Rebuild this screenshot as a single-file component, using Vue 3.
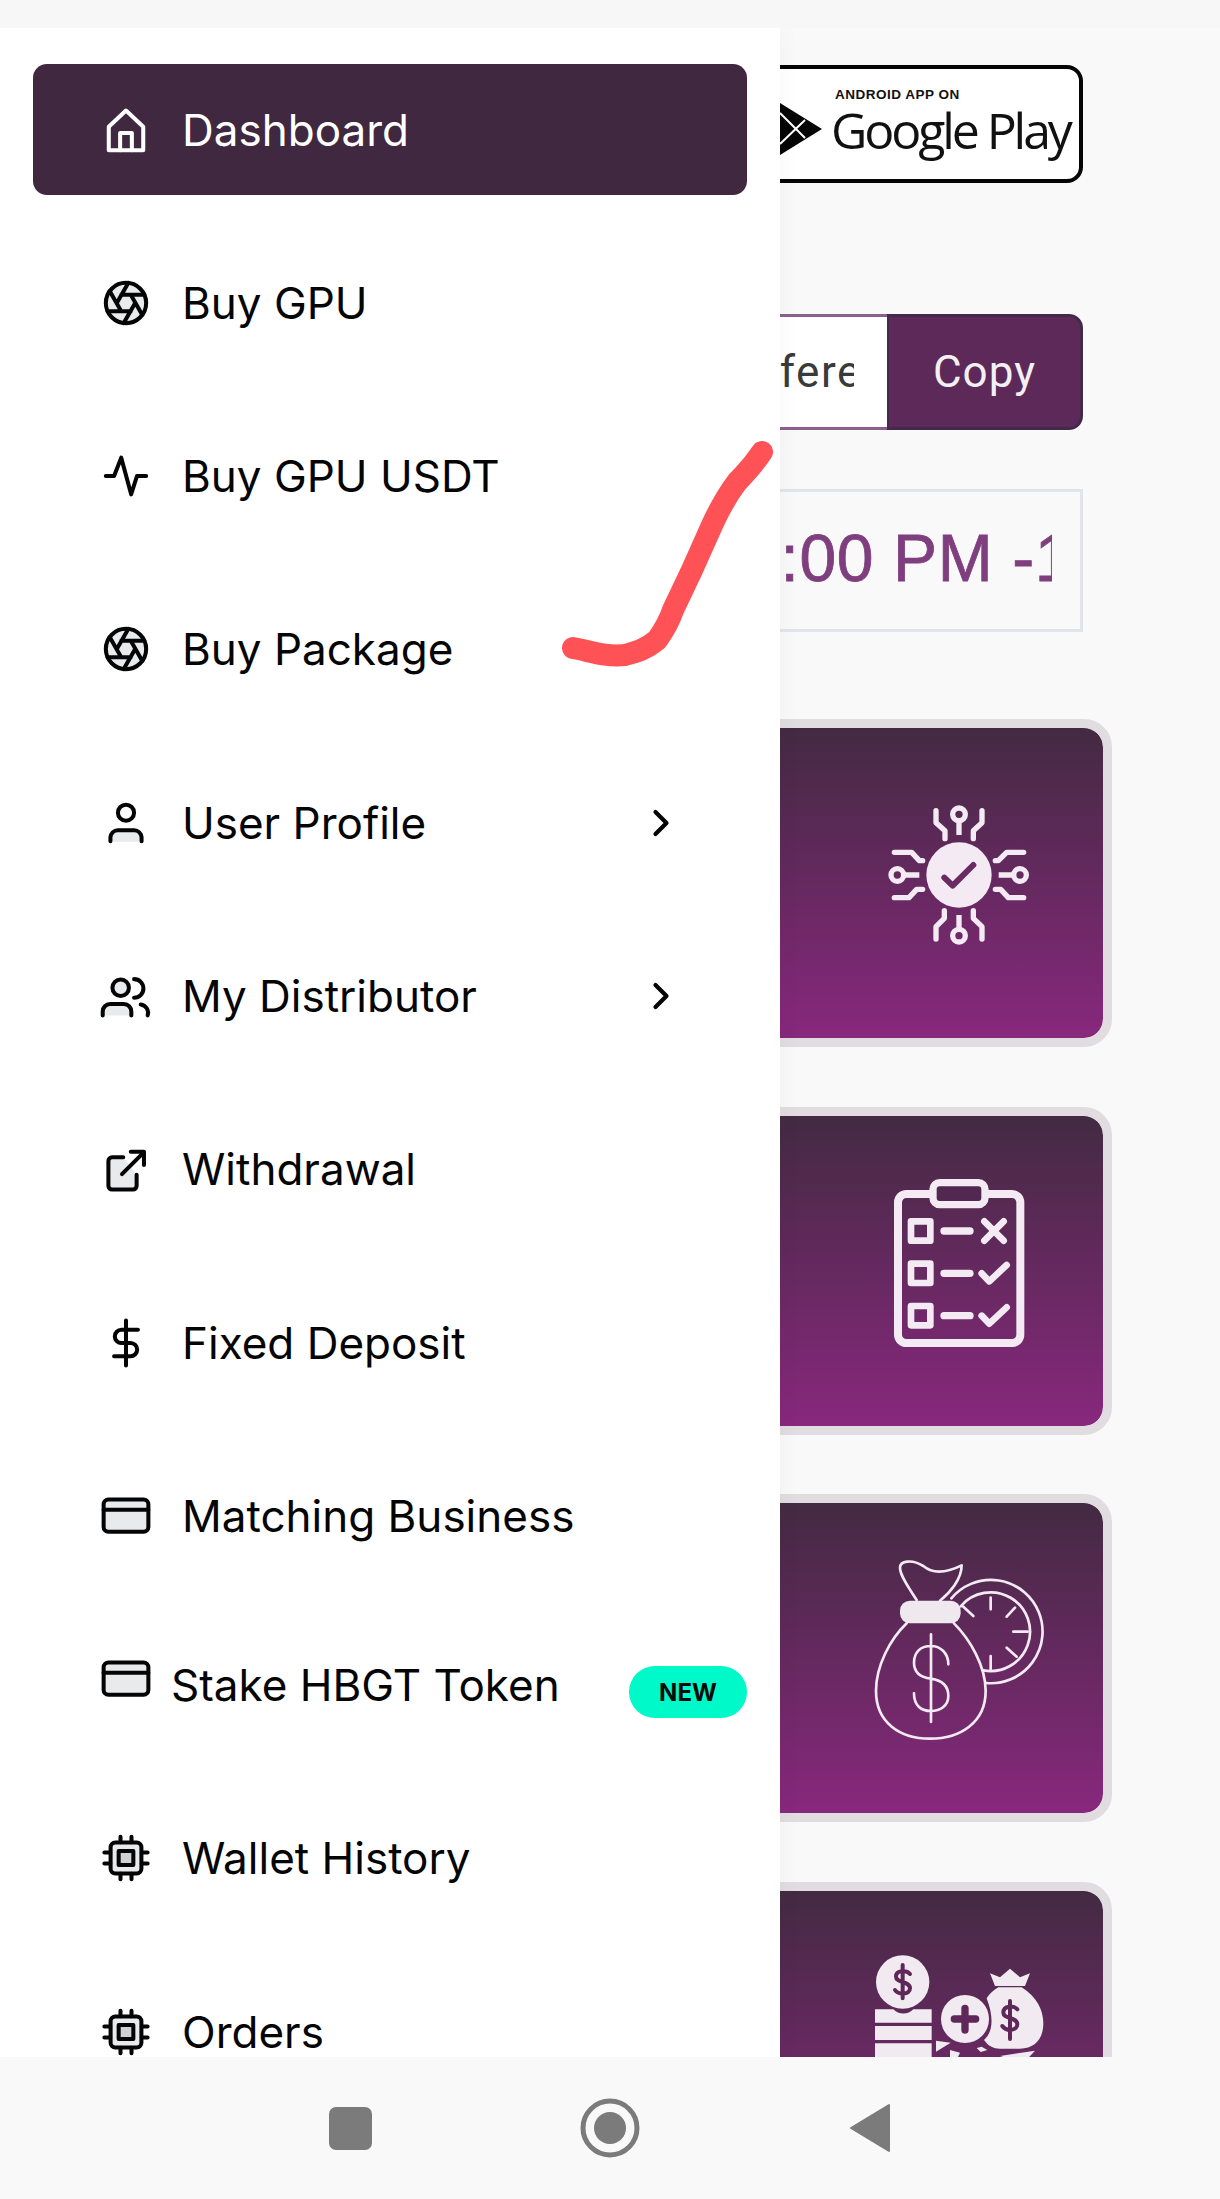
<script setup>
const cards = ['chip', 'list', 'bag', 'coins']
const items = [
  { label: 'Dashboard', icon: 'home', active: true },
  { label: 'Buy GPU', icon: 'aperture' },
  { label: 'Buy GPU USDT', icon: 'activity' },
  { label: 'Buy Package', icon: 'aperture' },
  { label: 'User Profile', icon: 'user', chevron: true },
  { label: 'My Distributor', icon: 'users', chevron: true },
  { label: 'Withdrawal', icon: 'external' },
  { label: 'Fixed Deposit', icon: 'dollar' },
  { label: 'Matching Business', icon: 'card' },
  { label: 'Stake HBGT Token', icon: 'card', stake: true, badge: 'NEW' },
  { label: 'Wallet History', icon: 'cpu' },
  { label: 'Orders', icon: 'cpu' },
]
</script>

<template>
  <div class="screen">
    <div class="status"></div>
    <div class="main">
      <div class="content">
        <div class="badge">
          <svg class="play" viewBox="0 0 52 52" width="52" height="52">
            <polygon points="0,0 10,0 52,26 10,52 0,52" fill="#050505" />
            <path d="M10 10 L35 35 M10 41 L35 17" stroke="#fff" stroke-width="2" />
          </svg>
          <div class="badge-text">
            <div class="badge-small">ANDROID APP ON</div>
            <div class="badge-big">Google Play</div>
          </div>
        </div>
        <div class="refer">
          <div class="refer-input"><div class="refer-clip">Reference</div></div>
          <button class="copy">Copy</button>
        </div>
        <div class="date"><div class="date-clip">10:00 PM -11:00 PM</div></div>
        <div class="cards">
          <div v-for="c in cards" :key="c" class="stat">
            <svg v-if="c === 'chip'" class="stat-icon" viewBox="327 255 540 540">
              <circle cx="597" cy="525" r="98" fill="#f3eaf3" />
              <path d="M553 533 L578 557 L640 495" fill="none" stroke="#6a2a63" stroke-width="18" stroke-linecap="round" stroke-linejoin="round" />
              <g fill="none" stroke="#f3eaf3" stroke-width="16" stroke-linecap="round" stroke-linejoin="round">
                <circle cx="597" cy="343" r="19" />
                <circle cx="597" cy="707" r="19" />
                <circle cx="412" cy="525" r="19" />
                <circle cx="780" cy="525" r="19" />
                <path d="M597 364V405M597 645V686M433 525H478M716 525H759" stroke-linecap="butt" />
                <path d="M528 332V368L555 392V416M666 332V368L640 392V416M528 717V680L553 655V632M666 717V680L640 655V632" />
                <path d="M403 457H455L478 482H488M791 457H740L715 482H706M403 593H447L470 568H488M791 593H745L722 568H706" />
              </g>
            </svg>
            <svg v-else-if="c === 'list'" class="stat-icon" viewBox="327 279 540 540">
              <g fill="none" stroke="#f3eaf3" stroke-linecap="round" stroke-linejoin="round">
                <rect x="414" y="342" width="367" height="447" rx="25" stroke-width="24" />
                <rect x="519" y="308" width="156" height="66" rx="20" stroke-width="22" fill="#502850" />
                <rect x="453" y="424" width="58" height="58" stroke-width="20" />
                <rect x="453" y="551" width="58" height="58" stroke-width="20" />
                <rect x="453" y="678" width="58" height="58" stroke-width="20" />
                <path d="M552 453H630M552 580H630M552 707H630" stroke-width="22" />
                <path d="M673 424L731 482M731 424L673 482M665 580L688 604L740 555M665 707L688 731L740 682" stroke-width="20" />
              </g>
            </svg>
            <svg v-else-if="c === 'bag'" class="stat-icon" viewBox="327 272 540 540">
              <g fill="none" stroke="#f3eaf3" stroke-width="8" stroke-linecap="round" stroke-linejoin="round">
                <path d="M470 392C450 360 420 320 420 295C420 275 455 268 490 290C520 315 560 310 605 288C605 330 570 370 540 394" />
                <path d="M440 462C390 510 348 590 348 665C348 760 420 808 510 808C600 808 677 760 677 665C677 590 630 510 582 462" />
                <path d="M513 495V758M565 585C565 550 540 530 513 530C480 530 462 550 462 580C462 615 490 625 513 628C540 632 565 645 565 680C565 710 540 725 513 725C485 725 462 710 462 672" />
                <path d="M574 387A155 155 0 1 1 678 641M602 411A118 118 0 1 1 670 603" />
                <path d="M692 385V420M765 415L740 442M803 487H760M770 562L740 535M692 600V560M610 412L640 440" />
              </g>
              <rect x="420" y="394" width="182" height="68" rx="30" fill="#efe9ef" />
            </svg>
            <svg v-else class="stat-icon" viewBox="327 294 540 540">
              <g fill="#f1ebf1">
                <circle cx="428" cy="396" r="80" />
                <path d="M345 478H400C415 495 445 495 460 478H515V518H345ZM345 528H515V570H345ZM345 580H515V660H345Z" />
                <path d="M690 370L720 382L750 356L780 382L810 370L795 408H705ZM715 412H785C830 440 850 480 850 520C850 565 825 596 780 596H720C700 596 685 588 672 570C695 550 705 510 680 445C690 430 700 420 715 412Z" />
                <circle cx="615" cy="507" r="72" />
                <path d="M528 605V572L572 578ZM650 594L665 590L682 600L662 606ZM570 600L600 608L590 630H570ZM720 618L825 602L790 640Z" />
              </g>
              <g fill="none" stroke="#5f2859" stroke-linecap="round" stroke-linejoin="round">
                <path d="M615 475V540M583 507H647" stroke-width="22" />
                <path d="M428 345V445M450 372C440 360 408 360 408 380C408 400 450 392 450 415C450 435 415 435 405 420" stroke-width="12" />
                <path d="M750 453V567M772 478C762 466 730 466 730 488C730 508 772 500 772 523C772 544 738 544 727 528" stroke-width="12" />
              </g>
            </svg>
          </div>
        </div>
      </div>

      <aside class="drawer">
        <div
          v-for="item in items"
          :key="item.label"
          class="row"
          :class="{ active: item.active, stake: item.stake }"
        >
          <svg class="ico" viewBox="0 0 24 24" fill="none" stroke="currentColor" stroke-width="2.2" stroke-linecap="round" stroke-linejoin="round">
            <template v-if="item.icon === 'home'">
              <path d="M2.6 23V10.2L12 1.4l9.4 8.8V23z" />
              <path d="M8.8 23V13.6h6.4V23" />
            </template>
            <template v-else-if="item.icon === 'aperture'">
              <circle cx="12" cy="12" r="11" fill="#e9eaec" />
              <path d="M14.6 7.5l6.3 11M9.4 7.5h12.6M7 12l6.3-11M9.4 16.5L3.1 5.5M14.6 16.5H2M17 12l-6.3 11" />
            </template>
            <template v-else-if="item.icon === 'activity'">
              <path d="M1 12h4.5L9.4 2l5.4 20 3.2-10h5" />
            </template>
            <template v-else-if="item.icon === 'user'">
              <path d="M3.5 22.2v-2.4a4 4 0 0 1 4-3.8h9a4 4 0 0 1 4 3.8v2.4z" fill="#e9eaec" stroke="none" />
              <path d="M3.5 22v-2.2a4 4 0 0 1 4-3.8h9a4 4 0 0 1 4 3.8V22" />
              <circle cx="12" cy="6.4" r="4.4" />
            </template>
            <template v-else-if="item.icon === 'users'">
              <path d="M-.7 22.6v-2.2a4 4 0 0 1 4-4h7.6a4 4 0 0 1 4 4v2.2z" fill="#e9eaec" stroke="none" />
              <circle cx="9.1" cy="7.5" r="4.5" fill="#e9eaec" />
              <path d="M-.7 22.6v-2.2a4 4 0 0 1 4-4h7.6a4 4 0 0 1 4 4v2.2" />
              <path d="M16.4 2.8a5 5 0 0 1 0 10.2M20 16.6a4.6 4.6 0 0 1 3.8 6" />
            </template>
            <template v-else-if="item.icon === 'external'">
              <path d="M10.5 5.6H4.4a2 2 0 0 0-2 2v13.6a2 2 0 0 0 2 2h11.4a2 2 0 0 0 2-2v-6.2z" fill="#e9eaec" stroke="none" />
              <path d="M10.5 5.6H4.4a2 2 0 0 0-2 2v13.6a2 2 0 0 0 2 2h11.4a2 2 0 0 0 2-2v-6" />
              <path d="M9.8 14.8L21 3.6M14.6 2.6h7.2v7.2" />
            </template>
            <template v-else-if="item.icon === 'dollar'">
              <path d="M12 -.3v24.6M18.5 4.8H9.5a3.6 3.6 0 0 0 0 7.2h5a3.6 3.6 0 0 1 0 7.2H5.5" />
            </template>
            <template v-else-if="item.icon === 'card'">
              <rect x="-.2" y="3" width="24.4" height="17.6" rx="2.6" fill="#e9eaec" />
              <path d="M-.2 8.6h24.4" />
            </template>
            <template v-else-if="item.icon === 'cpu'">
              <rect x="3.6" y="3.6" width="16.8" height="16.8" rx="2.6" fill="#e9eaec" />
              <rect x="8" y="8.2" width="8" height="7.6" fill="#cfd1d4" />
              <path d="M9 .4v3M15 .4v3M9 20.6v3M15 20.6v3M.2 9h3.2M.2 15h3.2M20.6 9h3.2M20.6 15h3.2" />
            </template>
          </svg>
          <span class="label">{{ item.label }}</span>
          <svg v-if="item.chevron" class="chev" viewBox="0 0 24 24" fill="none" stroke="currentColor" stroke-width="2.3" stroke-linecap="round" stroke-linejoin="round">
            <path d="M9 18l6-6-6-6" />
          </svg>
          <span v-if="item.badge" class="new">{{ item.badge }}</span>
        </div>
      </aside>

      <svg class="scribble" viewBox="0 0 800 700" width="800" height="700" fill="none">
        <path d="M762 452 C752 467 748 470 737 482 C728 494 720 508 713 523 L692 570 L673 610 C668 625 662 633 657 640 C645 650 635 652 625 655 C605 657 590 651 573 648" stroke="#ff5257" stroke-width="22" stroke-linecap="round" stroke-linejoin="round" />
      </svg>
    </div>
    <nav class="nav">
      <span class="nav-square"></span>
      <svg class="nav-home" viewBox="0 0 60 60" width="60" height="60">
        <circle cx="30" cy="30" r="27" fill="none" stroke="#7b7b7b" stroke-width="5" />
        <circle cx="30" cy="30" r="16" fill="#7b7b7b" />
      </svg>
      <svg class="nav-back" viewBox="0 0 42 50" width="42" height="50">
        <path d="M40 2 V48 L2 25 Z" fill="#7b7b7b" stroke="#7b7b7b" stroke-width="2" stroke-linejoin="round" />
      </svg>
    </nav>
  </div>
</template>

<style scoped>
.screen {
  position: relative;
  width: 1220px;
  height: 2199px;
  overflow: hidden;
  display: flex;
  flex-direction: column;
  background: #f9f9fa;
  font-family: Inter, "Liberation Sans", sans-serif;
}
.status {
  height: 28px;
  flex: none;
  background: #f7f7f7;
}
.main {
  position: relative;
  flex: 1;
  min-height: 0;
  overflow: hidden;
}
.content {
  display: flex;
  flex-direction: column;
  align-items: flex-end;
  padding: 37px 137px 0 0;
}
.badge {
  width: 360px;
  height: 118px;
  box-sizing: border-box;
  flex: none;
  display: flex;
  align-items: center;
  justify-content: flex-end;
  gap: 9px;
  padding-right: 12px;
  background: #fff;
  border: 4px solid #050505;
  border-radius: 16px;
}
.play {
  flex: none;
  margin-top: 10px;
}
.badge-text {
  width: 236px;
  margin-top: -4px;
}
.badge-small {
  margin-left: 4px;
  font: 700 13.5px/16px "Liberation Sans", sans-serif;
  letter-spacing: .5px;
  color: #111;
}
.badge-big {
  font: 400 50px/54px "Open Sans", sans-serif;
  letter-spacing: -3.1px;
  color: #111;
  white-space: nowrap;
}
.refer {
  margin-top: 131px;
  height: 116px;
  flex: none;
  display: flex;
}
.refer-input {
  width: 192px;
  box-sizing: border-box;
  padding: 0 33px 0 31px;
  display: flex;
  align-items: center;
  background: #fff;
  border: solid #8a5f8e;
  border-width: 3px 0;
}
.refer-clip {
  overflow: hidden;
  white-space: nowrap;
  font: 400 44px/60px Roboto, sans-serif;
  letter-spacing: 1.6px;
  color: #3a3a3a;
}
.copy {
  width: 196px;
  padding: 0;
  font: 400 44px/1 Roboto, sans-serif;
  letter-spacing: 1px;
  color: #f3f0f3;
  background: #5c2958;
  border: 3px solid #43294a;
  border-left-width: 2px;
  border-radius: 0 14px 14px 0;
}
.date {
  margin-top: 59px;
  width: 408px;
  height: 143px;
  flex: none;
  box-sizing: border-box;
  padding: 0 28px;
  display: flex;
  align-items: center;
  border: 3px solid #e2e4ea;
}
.date-clip {
  overflow: hidden;
  white-space: nowrap;
  width: 100%;
  margin-top: -6px;
  font: 400 66px/90px "Liberation Sans", sans-serif;
  letter-spacing: .6px;
  -webkit-text-stroke: .8px #7f3f7f;
  color: #7f3f7f;
}
.cards {
  margin: 87px -29px 0 0;
  display: flex;
  flex-direction: column;
  gap: 59.5px;
}
.stat {
  width: 400px;
  height: 328px;
  box-sizing: border-box;
  flex: none;
  padding: 57px 54px 0 0;
  display: flex;
  justify-content: flex-end;
  align-items: flex-start;
  background: linear-gradient(#432a42, #88287d);
  border: 9px solid #e0dce0;
  border-radius: 28px;
  background-clip: padding-box;
}
.stat-icon {
  width: 180px;
  height: 180px;
  flex: none;
}
.drawer {
  position: absolute;
  top: 0;
  left: 0;
  bottom: 0;
  width: 780px;
  box-sizing: border-box;
  padding: 36px 33px 0;
  display: flex;
  flex-direction: column;
  gap: 42.3px;
  background: #fff;
  box-shadow: 0 0 24px rgba(0, 0, 0, .04);
}
.row {
  height: 131px;
  flex: none;
  box-sizing: border-box;
  display: flex;
  align-items: center;
  gap: 34px;
  padding: 0 64px 0 71px;
  border-radius: 14px;
  color: #050505;
  font-size: 44px;
}
.row.active {
  background: #402840;
  color: #fff;
}
.row.stake {
  height: 127px;
  gap: 23px;
  padding-right: 0;
}
.row.stake .ico {
  margin-bottom: 16px;
}
.row.stake .label {
  margin-bottom: 4px;
}
.ico {
  width: 44px;
  height: 44px;
  flex: none;
  overflow: visible;
}
.label {
  white-space: nowrap;
}
.chev {
  width: 44px;
  height: 44px;
  flex: none;
  margin-left: auto;
}
.new {
  margin: 10px 0 0 auto;
  width: 118px;
  height: 52px;
  flex: none;
  display: flex;
  align-items: center;
  justify-content: center;
  border-radius: 26px;
  background: #00f9c8;
  color: #0a0a0a;
  font-size: 24px;
  font-weight: 700;
}
.scribble {
  position: absolute;
  top: -28px;
  left: 0;
  pointer-events: none;
}
.nav {
  position: relative;
  height: 142px;
  flex: none;
  display: flex;
  align-items: center;
  background: #f9f9f9;
  padding: 0 0 0 329px;
  box-sizing: border-box;
}
.nav-square {
  width: 43px;
  height: 43px;
  border-radius: 7px;
  background: #7b7b7b;
}
.nav-home {
  margin-left: 208px;
}
.nav-back {
  margin-left: 209px;
}
</style>
